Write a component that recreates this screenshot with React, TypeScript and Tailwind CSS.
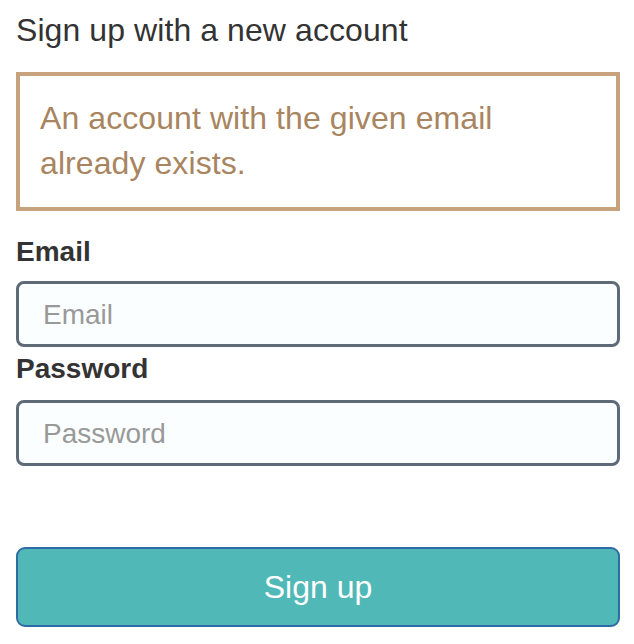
import React from "react";

export default function App() {
  return (
    <div
      className="w-[634px] min-h-[644px] bg-white pl-[16px] pr-[14px] pt-[8px] text-[#333333]"
      style={{ fontFamily: '"Liberation Sans", Arial, Helvetica, sans-serif' }}
    >
      <h1 className="text-[32px] leading-[1.42857] font-normal tracking-[0.08px]">Sign up with a new account</h1>
      <div className="mt-[18px] border-[4px] border-[#c6a37d] p-[20px] text-[32px] leading-[1.42857] text-[#a88560] tracking-[0.08px]">
        An account with the given email already exists.
      </div>
      <form className="flex flex-col" onSubmit={(e) => e.preventDefault()}>
        <label className="mt-[21px] mb-[9px] text-[28px] leading-[40px] font-bold">Email</label>
        <input
          type="email"
          placeholder="Email"
          className="h-[66px] w-full rounded-[8px] border-[3px] border-[#5e6a77] bg-[#fbfefe] pl-[24px] pt-[2px] text-[28px] text-[#333333] placeholder:text-[#999999] outline-none"
        />
        <label className="mt-[2px] mb-[11px] text-[28px] leading-[40px] font-bold">Password</label>
        <input
          type="password"
          placeholder="Password"
          className="h-[66px] w-full rounded-[8px] border-[3px] border-[#5e6a77] bg-[#fbfefe] pl-[24px] pt-[2px] text-[28px] text-[#333333] placeholder:text-[#999999] outline-none"
        />
        <button
          type="submit"
          className="mt-[81px] flex h-[80px] w-full items-center justify-center rounded-[9px] border-[2px] border-[#2f6ca5] bg-[#50b8b7] text-[32px] text-white"
        >
          Sign up
        </button>
      </form>
    </div>
  );
}
